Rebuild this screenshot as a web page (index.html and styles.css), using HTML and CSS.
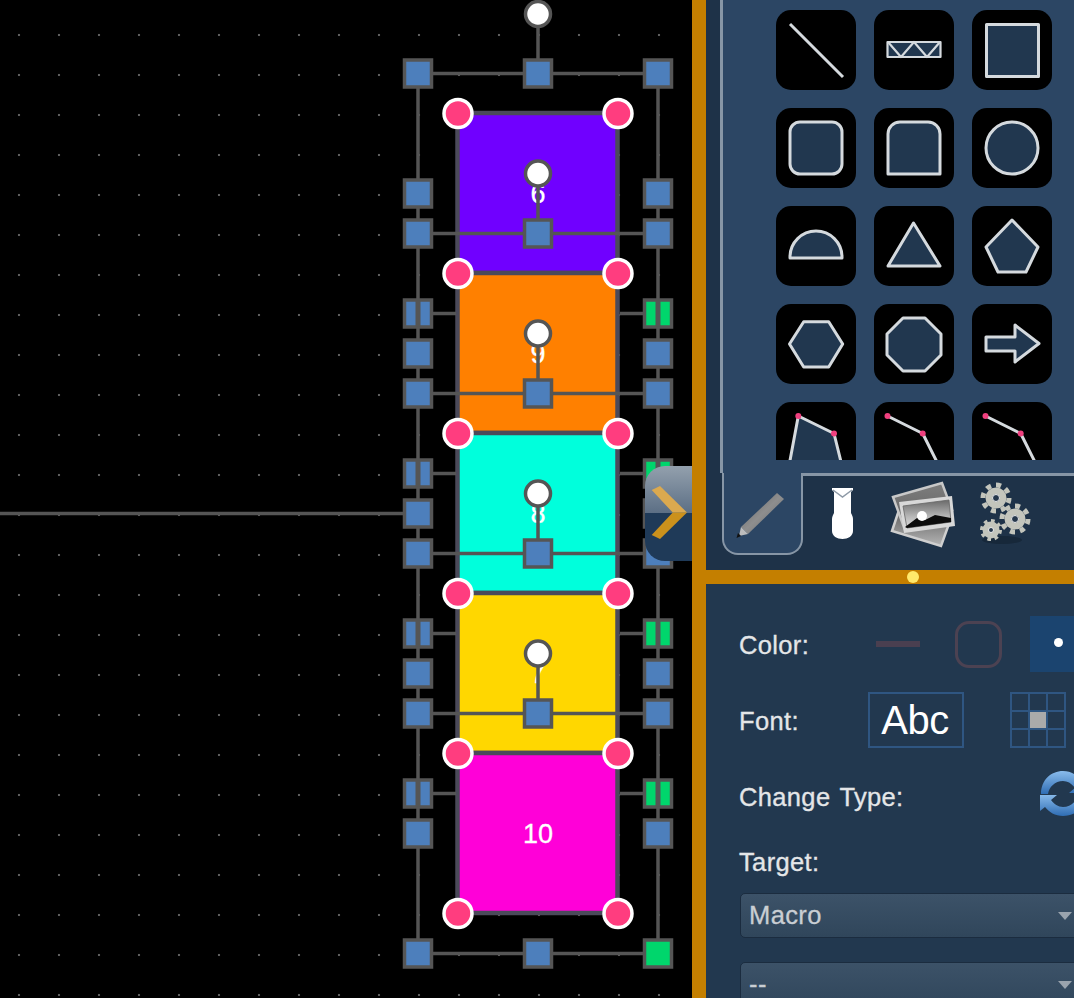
FILE: index.html
```html
<!DOCTYPE html>
<html lang="en">
<head>
<meta charset="utf-8">
<title>Editor</title>
<link rel="stylesheet" href="styles.css">
</head>
<body>
<div class="app">
  <main class="canvas">
    <svg class="diagram" width="692" height="998" viewBox="0 0 692 998">
      <defs>
        <g id="sq"><rect class="sq" x="-13.5" y="-13.5" width="27" height="27"/></g>
        <g id="sqg"><rect class="sq green" x="-13.5" y="-13.5" width="27" height="27"/></g>
        <g id="sp"><rect class="sq" x="-13.5" y="-13.5" width="27" height="27"/><line class="split" x1="0" y1="-13" x2="0" y2="13"/></g>
        <g id="spg"><rect class="sq green" x="-13.5" y="-13.5" width="27" height="27"/><line class="split" x1="0" y1="-13" x2="0" y2="13"/></g>
        <g id="ci"><circle class="rot" r="12.5"/></g>
        <g id="pk"><circle class="pink" r="14"/></g>
      </defs>

      <line class="ln" x1="0" y1="513.5" x2="404" y2="513.5"/>

      <rect class="box" fill="#7000ff" x="457.5" y="113" width="160" height="160"/>
      <rect class="box" fill="#ff8000" x="457.5" y="273" width="160" height="160"/>
      <rect class="box" fill="#00ffdc" x="457.5" y="433" width="160" height="160"/>
      <rect class="box" fill="#ffd700" x="457.5" y="593" width="160" height="160"/>
      <rect class="box" fill="#ff00d8" x="457.5" y="753" width="160" height="160"/>

      <text class="num" x="538" y="203">6</text>
      <text class="num" x="538" y="363">9</text>
      <text class="num" x="538" y="523">8</text>
      <text class="num" x="538" y="683">7</text>
      <text class="num" x="538" y="843">10</text>

      <line class="ln" x1="418" y1="73.5" x2="418" y2="953.5"/>
      <line class="ln" x1="658" y1="73.5" x2="658" y2="953.5"/>
      <line class="ln" x1="418" y1="73.5" x2="658" y2="73.5"/>
      <line class="ln" x1="418" y1="233.5" x2="658" y2="233.5"/>
      <line class="ln" x1="418" y1="393.5" x2="658" y2="393.5"/>
      <line class="ln" x1="418" y1="553.5" x2="658" y2="553.5"/>
      <line class="ln" x1="418" y1="713.5" x2="658" y2="713.5"/>
      <line class="ln" x1="418" y1="953.5" x2="658" y2="953.5"/>
      <line class="ln" x1="418" y1="313.5" x2="456" y2="313.5"/>
      <line class="ln" x1="620" y1="313.5" x2="658" y2="313.5"/>
      <line class="ln" x1="418" y1="473.5" x2="456" y2="473.5"/>
      <line class="ln" x1="620" y1="473.5" x2="658" y2="473.5"/>
      <line class="ln" x1="418" y1="633.5" x2="456" y2="633.5"/>
      <line class="ln" x1="620" y1="633.5" x2="658" y2="633.5"/>
      <line class="ln" x1="418" y1="793.5" x2="456" y2="793.5"/>
      <line class="ln" x1="620" y1="793.5" x2="658" y2="793.5"/>
      <line class="ln" x1="538" y1="14" x2="538" y2="73.5"/>
      <line class="ln" x1="538" y1="173.5" x2="538" y2="233.5"/>
      <line class="ln" x1="538" y1="333.5" x2="538" y2="393.5"/>
      <line class="ln" x1="538" y1="493.5" x2="538" y2="553.5"/>
      <line class="ln" x1="538" y1="653.5" x2="538" y2="713.5"/>

      <use href="#sq" x="418" y="73.5"/><use href="#sq" x="538" y="73.5"/><use href="#sq" x="658" y="73.5"/>
      <use href="#sq" x="418" y="193.5"/><use href="#sq" x="658" y="193.5"/>
      <use href="#sq" x="418" y="233.5"/><use href="#sq" x="538" y="233.5"/><use href="#sq" x="658" y="233.5"/>
      <use href="#sp" x="418" y="313.5"/><use href="#spg" x="658" y="313.5"/>
      <use href="#sq" x="418" y="353.5"/><use href="#sq" x="658" y="353.5"/>
      <use href="#sq" x="418" y="393.5"/><use href="#sq" x="538" y="393.5"/><use href="#sq" x="658" y="393.5"/>
      <use href="#sp" x="418" y="473.5"/><use href="#spg" x="658" y="473.5"/>
      <use href="#sq" x="418" y="513.5"/><use href="#sq" x="658" y="513.5"/>
      <use href="#sq" x="418" y="553.5"/><use href="#sq" x="538" y="553.5"/><use href="#sq" x="658" y="553.5"/>
      <use href="#sp" x="418" y="633.5"/><use href="#spg" x="658" y="633.5"/>
      <use href="#sq" x="418" y="673.5"/><use href="#sq" x="658" y="673.5"/>
      <use href="#sq" x="418" y="713.5"/><use href="#sq" x="538" y="713.5"/><use href="#sq" x="658" y="713.5"/>
      <use href="#sp" x="418" y="793.5"/><use href="#spg" x="658" y="793.5"/>
      <use href="#sq" x="418" y="833.5"/><use href="#sq" x="658" y="833.5"/>
      <use href="#sq" x="418" y="953.5"/><use href="#sq" x="538" y="953.5"/><use href="#sqg" x="658" y="953.5"/>

      <use href="#ci" x="538" y="14"/><use href="#ci" x="538" y="173.5"/><use href="#ci" x="538" y="333.5"/><use href="#ci" x="538" y="493.5"/><use href="#ci" x="538" y="653.5"/>

      <use href="#pk" x="458" y="113.5"/><use href="#pk" x="618" y="113.5"/>
      <use href="#pk" x="458" y="273.5"/><use href="#pk" x="618" y="273.5"/>
      <use href="#pk" x="458" y="433.5"/><use href="#pk" x="618" y="433.5"/>
      <use href="#pk" x="458" y="593.5"/><use href="#pk" x="618" y="593.5"/>
      <use href="#pk" x="458" y="753.5"/><use href="#pk" x="618" y="753.5"/>
      <use href="#pk" x="458" y="913.5"/><use href="#pk" x="618" y="913.5"/>
    </svg>
    <button class="collapse" type="button" aria-label="Collapse">
      <svg width="47" height="95" viewBox="0 0 47 95">
        <polygon fill="#dba94f" points="6.700,24 15,20 42,46.500 27.700,46.500"/>
        <polygon fill="#cb911c" points="27.700,46.500 42,46.500 15,73 6.700,69"/>
      </svg>
    </button>
  </main>

  <div class="vbar"></div>

  <aside class="side">
    <section class="top">
      <div class="pane">
        <div class="tiles">
          <div class="tile"><svg class="ic" viewBox="0 0 80 80"><line x1="14" y1="14" x2="67" y2="67"/></svg></div>
          <div class="tile"><svg class="ic thin" viewBox="0 0 80 80"><rect x="13.500" y="32" width="53" height="15"/><polyline points="14,32 27,47 40,32 53,47 66,32"/></svg></div>
          <div class="tile"><svg class="ic" viewBox="0 0 80 80"><rect x="14.500" y="14.500" width="52" height="52"/></svg></div>

          <div class="tile"><svg class="ic" viewBox="0 0 80 80"><rect x="14" y="14" width="52" height="52" rx="10"/></svg></div>
          <div class="tile"><svg class="ic" viewBox="0 0 80 80"><path d="M14 66V26a12 12 0 0 1 12-12h28a12 12 0 0 1 12 12v40z"/></svg></div>
          <div class="tile"><svg class="ic" viewBox="0 0 80 80"><circle cx="40" cy="40" r="26"/></svg></div>

          <div class="tile"><svg class="ic" viewBox="0 0 80 80"><path d="M14 52v-1a26 26 0 0 1 52 0v1z"/></svg></div>
          <div class="tile"><svg class="ic" viewBox="0 0 80 80"><polygon points="39.500,17 66,60 14,60"/></svg></div>
          <div class="tile"><svg class="ic" viewBox="0 0 80 80"><polygon points="40,14 66,41 54,66 26,66 14,41"/></svg></div>

          <div class="tile"><svg class="ic" viewBox="0 0 80 80"><polygon points="13.500,40 27.700,17.700 52.700,17.700 66.700,40 52.700,63 27.700,63"/></svg></div>
          <div class="tile"><svg class="ic" viewBox="0 0 80 80"><polygon points="29,14 51,14 67,30 67,51 51,67 29,67 13,51 13,30"/></svg></div>
          <div class="tile"><svg class="ic" viewBox="0 0 80 80"><polygon points="14,33 43,33 43,21 67,39.500 43,58 43,47 14,47"/></svg></div>

          <div class="tile"><svg class="ic" viewBox="0 0 80 80"><polygon points="22.300,14 58,31.500 70,80 10,80"/><circle class="node" cx="22.300" cy="14" r="3"/><circle class="node" cx="58" cy="31.500" r="3"/></svg></div>
          <div class="tile"><svg class="ic open" viewBox="0 0 80 80"><polyline points="13.500,14 48.700,31.500 68,70"/><circle class="node" cx="13.500" cy="14" r="3"/><circle class="node" cx="48.700" cy="31.500" r="3"/></svg></div>
          <div class="tile"><svg class="ic open" viewBox="0 0 80 80"><polyline points="13.500,14 48.700,31.500 68,70"/><circle class="node" cx="13.500" cy="14" r="3"/><circle class="node" cx="48.700" cy="31.500" r="3"/></svg></div>
        </div>
      </div>
      <nav class="tabs">
        <div class="tab-active">
          <svg width="54" height="54" viewBox="0 0 54 54">
            <defs>
              <linearGradient id="pen" x1="0" y1="0" x2="1" y2="1"><stop offset="0" stop-color="#5f5f5f"/><stop offset="0.5" stop-color="#8e8e8e"/><stop offset="1" stop-color="#6a6a6a"/></linearGradient>
            </defs>
            <polygon fill="url(#pen)" points="8,37 44,3 51,9 15,44"/>
            <polygon fill="#bdbdbd" points="8,37 15,44 6,46"/>
            <polygon fill="#111" points="5,43 8,46 3.500,48"/>
          </svg>
        </div>
        <div class="strip">
          <svg class="bottle" width="22" height="68" viewBox="0 0 22 68">
            <path fill="#fff" d="M1 8h21v2l-2 2v21c1 2 2 4 2 6v12c0 5-5 8-10.500 8S1 56 1 51V39c0-2 1-4 2-6V12L1 10z"/>
            <polyline fill="none" stroke="#8d99a6" stroke-width="1.500" points="2,10 11.500,17 21,10"/>
          </svg>
          <svg class="photos" width="65" height="68" viewBox="0 0 65 68">
            <defs>
              <linearGradient id="ph" x1="0" y1="0" x2="0" y2="1"><stop offset="0" stop-color="#7d7d7d"/><stop offset="1" stop-color="#5f5f5f"/></linearGradient>
              <linearGradient id="ph2" x1="0" y1="0" x2="0" y2="1"><stop offset="0" stop-color="#6a6a6a"/><stop offset="0.6" stop-color="#b8b8b8"/><stop offset="1" stop-color="#ddd"/></linearGradient>
              <linearGradient id="ph3" x1="0" y1="0" x2="0" y2="1"><stop offset="0" stop-color="#555"/><stop offset="1" stop-color="#b5b5b5"/></linearGradient>
            </defs>
            <polygon fill="url(#ph3)" stroke="#cfcfcf" stroke-width="2.500" points="2,51 10,27 60,41 51,66"/>
            <polygon fill="url(#ph)" stroke="#c8c8c8" stroke-width="2.500" points="3,17 52,3 62,30 15,50"/>
            <polygon fill="#d8d8d8" points="9,22 62,16 65,46 14,53"/>
            <polygon fill="url(#ph2)" stroke="#666" stroke-width="0.800" points="13,26 59,20 61,42 17,48"/>
            <polygon fill="#0c0c0c" points="15,47 27,38 35,40 45,35 61,38 61,42 17,48"/>
            <circle fill="#fff" cx="32" cy="36" r="5"/>
          </svg>
          <svg class="gears" width="52" height="68" viewBox="0 0 52 68">
            <ellipse cx="22" cy="60" rx="20" ry="4" fill="#17283a"/>
            <circle class="gear-t" cx="16" cy="18" r="13" pathLength="16"/>
            <circle class="gear-b" cx="16" cy="18" r="7"/>
            <circle class="gear-h" cx="16" cy="18" r="3.500"/>
            <circle class="gear-t" cx="35" cy="39" r="13" pathLength="16"/>
            <circle class="gear-b" cx="35" cy="39" r="7"/>
            <circle class="gear-h" cx="35" cy="39" r="3.500"/>
            <circle class="gear-t small" cx="11" cy="50" r="9" pathLength="16"/>
            <circle class="gear-b" cx="11" cy="50" r="5"/>
            <circle class="gear-h" cx="11" cy="50" r="2.500"/>
          </svg>
        </div>
      </nav>
    </section>

    <div class="hbar"><span class="grip"></span></div>

    <section class="props">
      <div class="row row-color">
        <span class="label w-color">Color:</span>
        <span class="swatch-line"></span>
        <span class="swatch-round"></span>
        <span class="swatch-fill"><span class="star"></span></span>
      </div>
      <div class="row row-font">
        <span class="label w-font">Font:</span>
        <span class="abc">Abc</span>
        <span class="align">
          <i></i><i></i><i></i><i></i><i class="on"></i><i></i><i></i><i></i><i></i>
        </span>
      </div>
      <div class="row row-type">
        <span class="label w-type">Change Type:</span>
        <svg class="refresh" width="50" height="46" viewBox="0 0 50 46">
          <defs>
            <linearGradient id="rf" x1="0" y1="0" x2="0" y2="1"><stop offset="0" stop-color="#8abcec"/><stop offset="1" stop-color="#2f6db4"/></linearGradient>
          </defs>
          <path fill="url(#rf)" d="M1 24C1 10 11 1 23 1c8 0 14 4 18 9l5-4v17H29l6-5c-3-4-7-7-12-7-8 0-14 6-15 13z"/>
          <path fill="url(#rf)" d="M46 24c0 13-10 22-23 22-8 0-14-4-18-9l-5 4V25h17l-6 5c3 4 7 7 12 7 8 0 14-6 15-13z"/>
        </svg>
      </div>
      <div class="label target">Target:</div>
      <div class="select"><span>Macro</span><span class="caret"></span></div>
      <div class="select second"><span>--</span><span class="caret"></span></div>
    </section>
  </aside>
</div>
</body>
</html>
```

FILE: styles.css
```css
* { box-sizing: border-box; }
html, body { margin: 0; padding: 0; background: #000; }
body { width: 1074px; height: 998px; overflow: hidden; font-family: "Liberation Sans", Arial, sans-serif; }

.app { display: flex; width: 1074px; height: 998px; }

.canvas {
  position: relative;
  flex: 0 0 692px;
  height: 998px;
  overflow: hidden;
  background-color: #000;
  background-image: radial-gradient(circle at 20px 20px, #6a6a6a 0, #5a5a5a 1px, transparent 1.6px);
  background-size: 40px 40px;
  background-position: -1px 15px;
}
.diagram { display: block; }
.ln { stroke: #555; stroke-width: 3.5; }
.box { stroke: #4b4a5a; stroke-width: 4.5; }
.sq { fill: #4d7fbc; stroke: #555; stroke-width: 3.5; }
.sq.green { fill: #00d66c; }
.split { stroke: #555; stroke-width: 5; }
.rot { fill: #fff; stroke: #555; stroke-width: 3.5; }
.pink { fill: #ff3d7f; stroke: #fff; stroke-width: 3.5; }
.num { fill: #fff; stroke: #fff; stroke-width: 0.3; font-family: "Liberation Sans", Arial, sans-serif; font-size: 27px; text-anchor: middle; }

.collapse {
  position: absolute;
  right: 0;
  top: 466px;
  width: 47px;
  height: 95px;
  padding: 0;
  border: 0;
  border-radius: 20px 0 0 20px;
  background: linear-gradient(#93a0ad 0, #5c6f85 49.5%, #1f3a58 50%, #1f3a58 100%);
}
.collapse svg { display: block; }

.vbar { flex: 0 0 14px; background: #c47f00; }

.side { flex: 0 0 368px; height: 998px; display: flex; flex-direction: column; overflow: hidden; }

.top { flex: 0 0 570px; display: flex; flex-direction: column; background: #1e3248; }
.pane {
  flex: 0 0 473px;
  margin-left: 14px;
  border-left: 3px solid #8796a6;
  background: #2c4664;
  padding: 0 0 13px 53px;
}
.tiles {
  height: 460px;
  overflow: hidden;
  display: grid;
  grid-template-columns: repeat(3, 80px);
  grid-auto-rows: 80px;
  gap: 18px;
  padding-top: 10px;
}
.tile { width: 80px; height: 80px; background: #000; border-radius: 15px; }
.ic { display: block; width: 80px; height: 80px; }
.ic line, .ic rect, .ic circle, .ic path, .ic polygon, .ic polyline {
  fill: #21374f;
  stroke: #d5dade;
  stroke-width: 3;
  stroke-linejoin: round;
}
.ic.thin rect, .ic.thin polyline { stroke-width: 2.2; }
.ic.thin polyline { fill: none; }
.ic.open polyline { fill: none; }
.ic circle.node { fill: #f0407f; stroke: none; }

.tabs { flex: 1 1 auto; display: flex; align-items: flex-start; }
.tab-active {
  flex: 0 0 81px;
  width: 81px;
  height: 82px;
  margin-left: 16px;
  padding: 17px 0 0 9px;
  background: #2c4664;
  border: 2px solid #8796a6;
  border-top: 0;
  border-radius: 0 0 16px 16px;
}
.tab-active svg { display: block; }
.strip {
  flex: 1 1 auto;
  display: flex;
  align-items: flex-start;
  padding: 4px 0 0 28px;
  border-top: 3px solid #8796a6;
}
.strip svg { display: block; flex: 0 0 auto; }
.photos { margin-left: 37px; }
.gears { margin-left: 25px; }
.gear-t { fill: none; stroke: #c3c5bc; stroke-width: 5; stroke-dasharray: 1 1; }
.gear-t.small { stroke-width: 4; }
.gear-b { fill: none; stroke: #c3c5bc; stroke-width: 7; }
.gear-h { fill: #26384c; stroke: #eee; stroke-width: 1; }

.hbar { flex: 0 0 14px; background: #c47f00; display: flex; align-items: center; padding-left: 201px; }
.grip { width: 12px; height: 12px; border-radius: 50%; background: #ffe96b; }

.props {
  flex: 1 1 auto;
  background: #22384f;
  padding: 32px 0 0 33px;
  overflow: hidden;
  color: #e6e8ea;
}
.label {
  font-size: 25.5px;
  letter-spacing: 0.35px;
  color: #e4e6e8;
  flex: 0 0 auto;
  padding-top: 2px;
  -webkit-text-stroke: 0.3px #e4e6e8;
}
.row { display: flex; align-items: center; }
.row-color { height: 56px; }
.row-font { height: 56px; margin-top: 20px; }
.row-type { height: 46px; margin-top: 22px; }
.w-color { width: 137px; }
.w-font { width: 129px; }
.w-type { width: 301px; padding-top: 8px; word-spacing: 2px; }

.swatch-line { flex: 0 0 44px; height: 6px; background: #4a3f50; margin-right: 35px; }
.swatch-round { flex: 0 0 47px; height: 47px; border: 3px solid #4c4252; border-radius: 14px; margin-right: 28px; }
.swatch-fill { flex: 0 0 56px; height: 56px; background: #1b446f; display: flex; align-items: center; justify-content: center; }
.star { width: 9px; height: 9px; background: #fff; border-radius: 50%; margin-bottom: 4px; }

.abc {
  flex: 0 0 96px;
  height: 56px;
  border: 2px solid #2f5682;
  color: #fff;
  font-size: 40px;
  line-height: 52px;
  text-align: center;
  letter-spacing: -0.5px;
  padding-right: 2px;
  margin-right: 46px;
}
.align {
  flex: 0 0 56px;
  height: 56px;
  display: grid;
  grid-template-columns: repeat(3, 1fr);
  grid-template-rows: repeat(3, 1fr);
  border: 1px solid #2f5682;
}
.align i { display: block; border: 1px solid #2f5682; }
.align i.on { background: #aaa; }
.refresh { flex: 0 0 auto; display: block; }

.target { margin-top: 28px; height: 33px; line-height: 33px; }
.select {
  display: flex;
  align-items: center;
  justify-content: space-between;
  width: 344px;
  height: 45px;
  margin-top: 16px;
  margin-left: 1px;
  padding: 0 11px 0 8px;
  border: 1px solid #1b2c3f;
  border-radius: 5px;
  background: linear-gradient(#3c5268, #30465b);
  color: #c9ced3;
  font-size: 25.5px;
  letter-spacing: 0.4px;
  -webkit-text-stroke: 0.3px #c9ced3;
}
.select.second { margin-top: 24px; }
.caret {
  width: 0;
  height: 0;
  border-left: 7px solid transparent;
  border-right: 7px solid transparent;
  border-top: 8px solid #9aa4ae;
}
```
